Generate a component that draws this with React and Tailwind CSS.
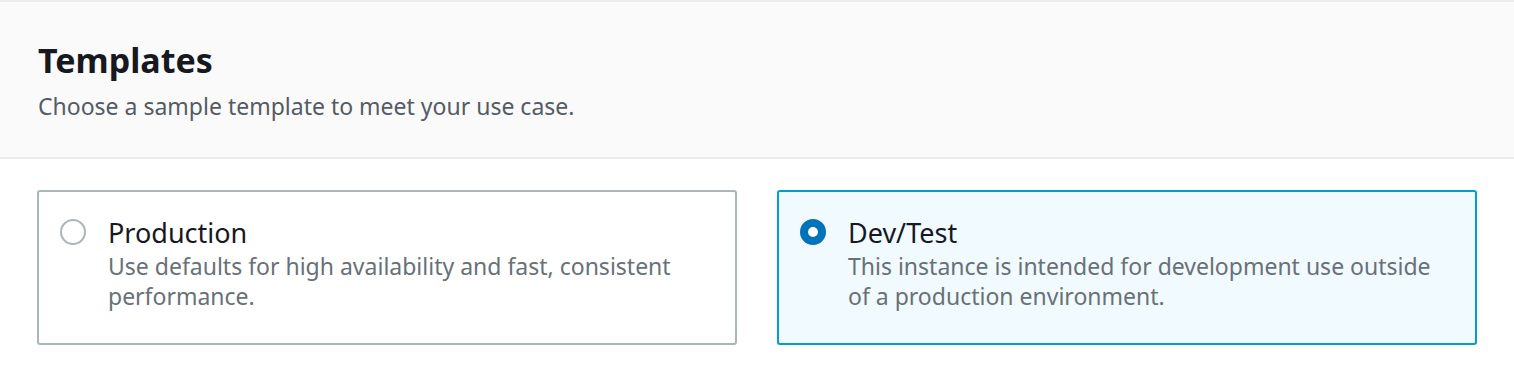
import React, { useState } from "react";

const options = [
  {
    id: "production",
    title: "Production",
    description:
      "Use defaults for high availability and fast, consistent performance.",
  },
  {
    id: "devtest",
    title: "Dev/Test",
    description:
      "This instance is intended for development use outside of a production environment.",
  },
];

const Radio = ({ checked }) =>
  checked ? (
    <span className="mt-[3px] box-border block h-[26px] w-[26px] shrink-0 rounded-full border-[8px] border-[#0073bb] bg-white" />
  ) : (
    <span className="mt-[3px] box-border block h-[26px] w-[26px] shrink-0 rounded-full border-2 border-[#aab7b8] bg-white" />
  );

const App = () => {
  const [selected, setSelected] = useState("devtest");

  return (
    <div className="h-[383px] w-full bg-white font-['Noto_Sans',sans-serif]">
      <div className="border-y-2 border-[#eaeded] bg-[#fafafa] px-[38px] pb-[36px] pt-[38px]">
        <h2 className="text-[34px] font-bold leading-[40px] text-[#16191f]">
          Templates
        </h2>
        <p className="mt-[11px] text-[23px] leading-[30px] text-[#545b64]">
          Choose a sample template to meet your use case.
        </p>
      </div>
      <div className="grid grid-cols-2 gap-[40px] pl-[37px] pr-[37px] pt-[31px]">
        {options.map((opt) => {
          const active = selected === opt.id;
          return (
            <button
              key={opt.id}
              type="button"
              onClick={() => setSelected(opt.id)}
              className={
                active
                  ? "flex h-[155px] items-start gap-[22px] rounded-[3px] border-2 border-[#00a1c9] bg-[#f1faff] pl-[21px] pt-[24px] text-left"
                  : "flex h-[155px] items-start gap-[22px] rounded-[3px] border-2 border-[#aab7b8] bg-white pl-[21px] pt-[24px] text-left"
              }
            >
              <Radio checked={active} />
              <div className="w-[598px]">
                <div className="text-[27px] leading-[34px] text-[#16191f]">
                  {opt.title}
                </div>
                <div className="mt-[1px] text-[23px] leading-[30px] text-[#687078]">
                  {opt.description}
                </div>
              </div>
            </button>
          );
        })}
      </div>
    </div>
  );
};

export default App;
